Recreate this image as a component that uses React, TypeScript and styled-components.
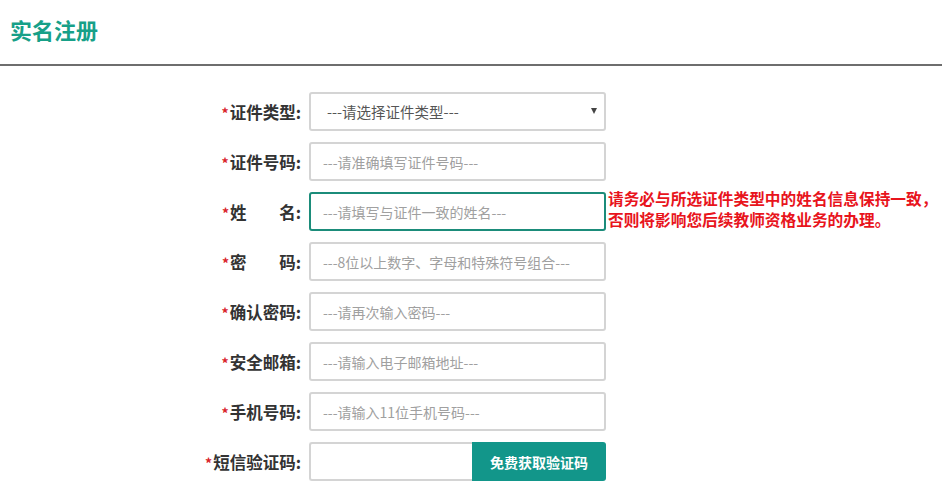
import styled, { createGlobalStyle } from "styled-components";

const GlobalStyle = createGlobalStyle`
  body {
    margin: 0;
    background: #fff;
    font-family: "Noto Sans CJK SC", "Noto Sans", sans-serif;
  }
`;

type Row = {
  label: string;
  spread?: boolean;
  placeholder: string;
  focused?: boolean;
};

const rows: Row[] = [
  { label: "证件号码", placeholder: "---请准确填写证件号码---" },
  {
    label: "姓名",
    spread: true,
    placeholder: "---请填写与证件一致的姓名---",
    focused: true,
  },
  { label: "密码", spread: true, placeholder: "---8位以上数字、字母和特殊符号组合---" },
  { label: "确认密码", placeholder: "---请再次输入密码---" },
  { label: "安全邮箱", placeholder: "---请输入电子邮箱地址---" },
  { label: "手机号码", placeholder: "---请输入11位手机号码---" },
];

export default function App() {
  return (
    <>
      <GlobalStyle />
      <Header>
        <Title>实名注册</Title>
      </Header>
      <Form>
        <FormRow>
          <Label>
            <Star>*</Star>证件类型:
          </Label>
          <SelectWrap>
            <Select defaultValue="">
              <option value="">---请选择证件类型---</option>
            </Select>
          </SelectWrap>
        </FormRow>

        {rows.map((r) => (
          <FormRow key={r.label}>
            <Label>
              {r.spread ? (
                <Spread>
                  <span>
                    <Star>*</Star>
                    {r.label[0]}
                  </span>
                  <span>{r.label[1]}:</span>
                </Spread>
              ) : (
                <>
                  <Star>*</Star>
                  {r.label}:
                </>
              )}
            </Label>
            <Input placeholder={r.placeholder} $focused={r.focused} />
            {r.focused && (
              <Hint>
                请务必与所选证件类型中的姓名信息保持一致，
                <br />
                否则将影响您后续教师资格业务的办理。
              </Hint>
            )}
          </FormRow>
        ))}

        <FormRow>
          <Label>
            <Star>*</Star>短信验证码:
          </Label>
          <CodeGroup>
            <CodeInput />
            <CodeButton type="button">免费获取验证码</CodeButton>
          </CodeGroup>
        </FormRow>
      </Form>
    </>
  );
}

const Header = styled.header`
  width: 942px;
  height: 66px;
  box-sizing: border-box;
  padding: 12px 0 0 10px;
  border-bottom: 2px solid #6e6e6e;
`;

const Title = styled.h1`
  margin: 0;
  font-size: 22px;
  font-weight: 700;
  line-height: 34px;
  color: #17a088;
`;

const Form = styled.form`
  display: flex;
  flex-direction: column;
  gap: 11px;
  padding: 26px 0 0 200px;
`;

const FormRow = styled.div`
  display: flex;
  align-items: center;
  height: 39px;
`;

const Label = styled.label`
  width: 101px;
  margin-right: 8px;
  text-align: right;
  font-size: 16.5px;
  font-weight: 700;
  color: #333;
  white-space: nowrap;
`;

const Spread = styled.span`
  display: inline-flex;
  justify-content: space-between;
  width: 79px;
`;

const Star = styled.span`
  color: #d9232a;
  font-size: 14px;
  margin-right: 1px;
`;

const fieldBase = `
  box-sizing: border-box;
  height: 39px;
  border: 2px solid #d4d4d4;
  border-radius: 3px;
  background: #fff;
  font-family: "Noto Sans CJK SC", "Noto Sans", sans-serif;
  font-size: 14px;
  outline: none;
`;

const SelectWrap = styled.div`
  position: relative;
  width: 297px;

  &::after {
    content: "";
    position: absolute;
    right: 9px;
    top: 16px;
    border-left: 3px solid transparent;
    border-right: 3px solid transparent;
    border-top: 6px solid #444;
    pointer-events: none;
  }
`;

const Select = styled.select`
  ${fieldBase}
  width: 100%;
  appearance: none;
  padding: 0 0 0 16px;
  font-size: 14.5px;
  color: #555;
`;

const Input = styled.input<{ $focused?: boolean }>`
  ${fieldBase}
  width: 297px;
  padding: 0 12px;
  border-color: ${(p) => (p.$focused ? "#1b8c7a" : "#d4d4d4")};
  color: #555;

  &::placeholder {
    color: #a0a0a0;
  }
`;

const Hint = styled.p`
  margin: -6px 0 0 2px;
  font-size: 15.7px;
  line-height: 21px;
  font-weight: 700;
  color: #e8141c;
  white-space: nowrap;
`;

const CodeGroup = styled.div`
  display: flex;
  width: 297px;
`;

const CodeInput = styled.input`
  ${fieldBase}
  width: 163px;
  border-radius: 3px 0 0 3px;
  border-right: none;
`;

const CodeButton = styled.button`
  flex: 1;
  height: 39px;
  border: none;
  border-radius: 0 3px 3px 0;
  background: #12968a;
  color: #fff;
  font-family: "Noto Sans CJK SC", "Noto Sans", sans-serif;
  font-size: 14px;
  font-weight: 700;
  cursor: pointer;
`;
